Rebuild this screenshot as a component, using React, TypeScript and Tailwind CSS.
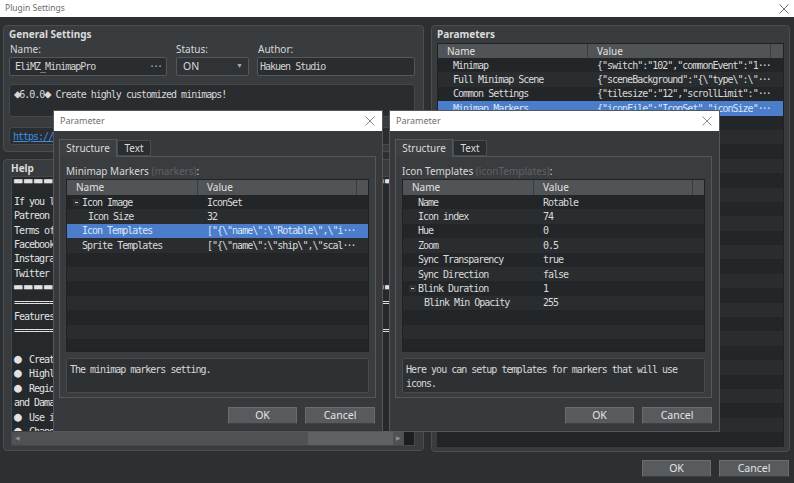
import React from 'react';

const MONO = "font-['DejaVu_Sans_Mono',monospace] text-[10px] tracking-[-1px]";
const SANS = "font-['Noto_Sans',sans-serif]";

type Row = {
  name: string;
  value: string;
  child?: boolean;
  toggle?: boolean;
  selected?: boolean;
};

function CloseX({ className }: { className?: string }) {
  return (
    <svg width="10" height="10" viewBox="0 0 10 10" className={className}>
      <path d="M0.5 0.5L9.5 9.5M9.5 0.5L0.5 9.5" stroke="currentColor" strokeWidth="1" fill="none" />
    </svg>
  );
}

function Dots() {
  return <span className="tracking-[-2px]">···</span>;
}

function Button({ label, width }: { label: string; width: string }) {
  return (
    <div
      className={`${width} h-[17px] flex items-center justify-center rounded-[1px] border border-[#6a6d70] border-b-[#3e4144] bg-[#585b5e] text-[10.5px] text-[#e4e4e4]`}
    >
      {label}
    </div>
  );
}

function PropTable({
  rows,
  total,
  height,
  headerH,
  nameW,
  valueW,
}: {
  rows: Row[];
  total: number;
  height: string;
  headerH: string;
  nameW: string;
  valueW: string;
}) {
  const list = Array.from({ length: total }, (_, i) => rows[i]);
  return (
    <div className={`${height} flex flex-col overflow-hidden border border-[#202225] bg-[#25282b]`}>
      <div className={`${headerH} shrink-0 flex bg-[#515457] text-[10px] text-[#e2e2e2]`}>
        <div className={`${nameW} shrink-0 flex items-center border-r border-[#3a3d40] pl-[9px]`}>Name</div>
        <div className={`${valueW} shrink-0 flex items-center border-r border-[#3a3d40] pl-[9px]`}>Value</div>
        <div className="flex-1" />
      </div>
      {list.map((r, i) => {
        const bg = r?.selected
          ? 'bg-[#4b7dca] text-[#d8e6f8]'
          : i % 2
            ? 'bg-[#2a2d30] text-[#dadada]'
            : 'bg-[#232629] text-[#dadada]';
        return (
          <div key={i} className={`h-[14.4px] shrink-0 flex items-center whitespace-pre ${MONO} ${bg}`}>
            {r && (
              <>
                <div
                  className={`${nameW} shrink-0 flex items-center overflow-hidden ${
                    r.toggle ? 'pl-[6px]' : r.child ? 'pl-[21px]' : 'pl-[15px]'
                  }`}
                >
                  {r.toggle && (
                    <span className="mr-[2px] flex h-[7px] w-[7px] items-center justify-center bg-[#303336]">
                      <span className="h-[1px] w-[3px] bg-[#d0d0d0]" />
                    </span>
                  )}
                  {r.name}
                </div>
                <div className={`${valueW} shrink-0 overflow-hidden pl-[9px]`}>
                  {r.value.endsWith('…') ? (
                    <>
                      {r.value.slice(0, -1)}
                      <Dots />
                    </>
                  ) : (
                    r.value
                  )}
                </div>
              </>
            )}
          </div>
        );
      })}
    </div>
  );
}

function Dialog({
  pos,
  width,
  title,
  keyName,
  rows,
  desc,
}: {
  pos: string;
  width: string;
  title: string;
  keyName: string;
  rows: Row[];
  desc: string[];
}) {
  return (
    <div className={`absolute top-[110px] ${pos} ${width} h-[322px] flex flex-col border border-[#55585b] bg-[#37393c]`}>
      <div className="h-[20px] shrink-0 flex items-center justify-between bg-white pl-[6px] pr-[7px]">
        <span className="text-[9px] text-[#6e6e6e]">Parameter</span>
        <CloseX className="text-[#8c8c8c]" />
      </div>
      <div className="px-[5px] pt-[8px]">
        <div className="relative z-10 flex h-[17px] items-end">
          <div className="-mb-[1px] flex h-[18px] w-[58px] items-center justify-center border-x border-t border-[#55585b] bg-[#3d4043] text-[10px] text-[#dcdcdc]">
            Structure
          </div>
          <div className="flex h-[16px] w-[34px] items-center justify-center border border-[#4a4d50] bg-[#2b2e31] text-[10px] text-[#dcdcdc]">
            Text
          </div>
        </div>
        <div className="h-[242px] w-[317px] border border-[#55585b] bg-[#3a3d40] px-[6px]">
          <div className="mt-[7px] h-[14px] leading-[14px] text-[10px] text-[#d8d8d8]">
            {title}
            <span className="text-[#5f6265]"> ({keyName})</span>:
          </div>
          <div className="mt-[1px]">
            <PropTable
              rows={rows}
              total={11}
              height="h-[173px]"
              headerH="h-[15px]"
              nameW="w-[131px]"
              valueW="w-[159px]"
            />
          </div>
          <div className={`mt-[6px] h-[35px] rounded-[2px] border border-[#474a4d] bg-[#2e3134] pl-[3px] pt-[4px] leading-[13.5px] text-[#d8d8d8] ${MONO}`}>
            {desc.map((d) => (
              <div key={d}>{d}</div>
            ))}
          </div>
        </div>
        <div className="mt-[9px] flex justify-end gap-[8px] pr-[2px]">
          <Button label="OK" width="w-[69px]" />
          <Button label="Cancel" width="w-[70px]" />
        </div>
      </div>
    </div>
  );
}

const BAR = '▬'.repeat(40);
const EQ = '='.repeat(80);

function Bullet({ text }: { text: string }) {
  return (
    <div className="h-[14.4px] leading-[14.4px]">
      <span className="inline-block w-[10px] text-[13px] leading-[10px] tracking-normal">●</span> {text}
    </div>
  );
}

function Line({ text }: { text: string }) {
  return <div className="h-[14.4px] leading-[14.4px]">{text}</div>;
}

function BarLine() {
  return (
    <div className="h-[14.4px] leading-[14.4px]">
      <span className="text-[14px] leading-[10px] tracking-[1.6px]">{BAR}</span>
    </div>
  );
}

function HelpPanel() {
  return (
    <div className="h-[292px] rounded-[4px] border border-[#4b4e51] bg-[#393c3f] px-[7px]">
      <div className="mt-[1px] h-[15px] leading-[15px] text-[10px] font-bold text-[#dcdcdc]">Help</div>
      <div className="h-[270px] w-[404px] flex flex-col border border-[#45484b] bg-[#26292c]">
        <div className="flex h-[254px]">
          <div className={`flex-1 overflow-hidden whitespace-pre pl-[2px] text-[#e2e2e2] ${MONO}`}>
            <div className="h-[17.8px]">
              <span className="block text-[14px] leading-[6px] tracking-[1.6px]">{BAR}</span>
            </div>
            <Line text="If you like my work, please consider supporting me on Patreon!" />
            <Line text="Patreon      → https://www.patreon.com/hakuenstudio" />
            <Line text="Terms of Use → https://www.hakuenstudio.com/terms-of-use-5-0-0" />
            <Line text="Facebook     → https://www.facebook.com/hakuenstudio" />
            <Line text="Instagram    → https://www.instagram.com/hakuenstudio" />
            <Line text="Twitter      → https://twitter.com/hakuen_studio" />
            <BarLine />
            <Line text={EQ} />
            <Line text="Features" />
            <Line text={EQ} />
            <Line text="" />
            <Bullet text="Create minimaps for any map, without the need of screenshots!" />
            <Bullet text="Highly customizable markers for events, players and vehicles!" />
            <Bullet text="Regions, terrain tags, passability, ladders, bushes, counters" />
            <Line text="and Damage floors can be displayed with their own colors!" />
            <Bullet text="Use images as minimaps too, with parallax support!" />
            <Bullet text="Change zoom, opacity, position and more during the game!" />
          </div>
          <div className="w-[12px] shrink-0 bg-[#44474a]" />
        </div>
        <div className="flex h-[14px]">
          <div className="flex w-[11px] items-center justify-center border-t border-[#3c3f42] bg-[#4f5255] text-[6px] text-[#8d9093]">◀</div>
          <div className="w-[285px] border-t border-[#3c3f42] bg-[#505356]" />
          <div className="w-[85px] bg-[#5f6265]" />
          <div className="flex w-[11px] items-center justify-center bg-[#4f5255] text-[6px] text-[#8d9093]">▶</div>
          <div className="flex-1 bg-[#1c1e20]" />
        </div>
      </div>
    </div>
  );
}

function GeneralPanel() {
  return (
    <div className="h-[127px] rounded-[4px] border border-[#4b4e51] bg-[#393c3f] px-[5px]">
      <div className="mt-[1px] h-[15px] leading-[15px] text-[10px] font-bold text-[#dcdcdc]">General Settings</div>
      <div className="flex h-[14px] items-center text-[10px] text-[#d8d8d8]">
        <div className="w-[158px] pl-[1px]">Name:</div>
        <div className="ml-[9px] w-[73px]">Status:</div>
        <div className="ml-[8px] w-[158px] pl-[1px]">Author:</div>
      </div>
      <div className="mt-[1px] flex h-[19px]">
        <div className={`flex w-[158px] items-center justify-between rounded-[2px] border border-[#55585b] bg-[#2a2d30] pl-[5px] pr-[5px] text-[#d4d4d4] ${MONO}`}>
          <span>EliMZ_MinimapPro</span>
          <span className="text-[#b0b0b0]">
            <Dots />
          </span>
        </div>
        <div className="ml-[9px] flex w-[73px] items-center justify-between rounded-[2px] border border-[#55585b] bg-[#303336] pl-[6px] pr-[5px] text-[10.5px] text-[#d8d8d8]">
          <span>ON</span>
          <span className="text-[7px] text-[#a8a8a8]">▼</span>
        </div>
        <div className={`ml-[8px] flex w-[158px] items-center rounded-[2px] border border-[#55585b] bg-[#2a2d30] pl-[2px] text-[#d4d4d4] ${MONO}`}>
          Hakuen Studio
        </div>
      </div>
      <div className={`mt-[8px] h-[33px] w-[406px] rounded-[3px] border border-[#45484b] bg-[#2a2d30] pl-[4px] pt-[2px] leading-[14px] text-[#d8d8d8] ${MONO}`}>
        <span className="text-[12px] tracking-[-2px]">◆</span>6.0.0<span className="text-[12px] tracking-[-1px]">◆</span> Create highly customized minimaps!
      </div>
      <div className={`mt-[10px] flex h-[18px] w-[406px] items-center rounded-[3px] border border-[#45484b] bg-[#2a2d30] pl-[3px] text-[#3d8fe0] underline ${MONO}`}>
        https://hakuenstudio.itch.io/eli-minimap-pro-for-rpg-maker-mz
      </div>
    </div>
  );
}

const paramRows: Row[] = [
  { name: 'Minimap', value: '{"switch":"102","commonEvent":"1…' },
  { name: 'Full Minimap Scene', value: '{"sceneBackground":"{\\"type\\":\\"…' },
  { name: 'Common Settings', value: '{"tilesize":"12","scrollLimit":"…' },
  { name: 'Minimap Markers', value: '{"iconFile":"IconSet","iconSize"…', selected: true },
];

function ParametersPanel() {
  return (
    <div className="h-[427px] w-[359px] rounded-[4px] border border-[#4b4e51] bg-[#393c3f] px-[5px]">
      <div className="mt-[1px] h-[15px] leading-[15px] text-[10px] font-bold text-[#dcdcdc]">Parameters</div>
      <div className="mt-[1px]">
        <PropTable
          rows={paramRows}
          total={27}
          height="h-[404px]"
          headerH="h-[14px]"
          nameW="w-[150px]"
          valueW="w-[183px]"
        />
      </div>
    </div>
  );
}

const markerRows: Row[] = [
  { name: 'Icon Image', value: 'IconSet', toggle: true },
  { name: 'Icon Size', value: '32', child: true },
  { name: 'Icon Templates', value: '["{\\"name\\":\\"Rotable\\",\\"i…', selected: true },
  { name: 'Sprite Templates', value: '["{\\"name\\":\\"ship\\",\\"scal…' },
];

const templateRows: Row[] = [
  { name: 'Name', value: 'Rotable' },
  { name: 'Icon index', value: '74' },
  { name: 'Hue', value: '0' },
  { name: 'Zoom', value: '0.5' },
  { name: 'Sync Transparency', value: 'true' },
  { name: 'Sync Direction', value: 'false' },
  { name: 'Blink Duration', value: '1', toggle: true },
  { name: 'Blink Min Opacity', value: '255', child: true },
];

export default function App() {
  return (
    <div className={`relative h-[483px] w-[794px] overflow-hidden bg-[#2d3033] ${SANS}`}>
      <div className="flex h-[17px] items-center justify-between bg-white pl-[5px] pr-[5px]">
        <span className="text-[8.5px] text-[#6a6a6a]">Plugin Settings</span>
        <CloseX className="text-[#707070]" />
      </div>

      <div className="flex gap-[7px] pl-[3px] pt-[8px]">
        <div className="flex w-[421px] flex-col gap-[7px]">
          <GeneralPanel />
          <HelpPanel />
        </div>
        <ParametersPanel />
      </div>

      <div className="mt-[8px] flex justify-end gap-[8px] pr-[5px]">
        <Button label="OK" width="w-[69px]" />
        <Button label="Cancel" width="w-[70px]" />
      </div>

      <Dialog
        pos="left-[53px]"
        width="w-[330px]"
        title="Minimap Markers"
        keyName="markers"
        rows={markerRows}
        desc={['The minimap markers setting.']}
      />
      <Dialog
        pos="left-[389px]"
        width="w-[331px]"
        title="Icon Templates"
        keyName="iconTemplates"
        rows={templateRows}
        desc={['Here you can setup templates for markers that will use', 'icons.']}
      />
    </div>
  );
}
